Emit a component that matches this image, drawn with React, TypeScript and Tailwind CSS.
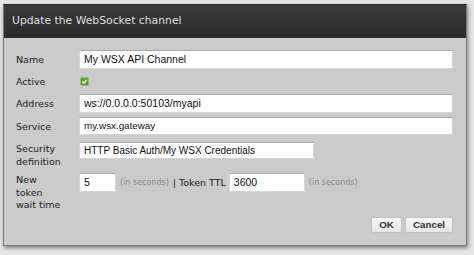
import React from "react";

function Field({ w, value, size = "text-[10.5px]", h = "h-[19px]" }: { w: string; value: string; size?: string; h?: string }) {
  return (
    <div
      className={`${w} ${h} ${size} bg-white border border-[#d4d4d4] border-t-[#a9a9a9] pl-[4px] flex items-center text-[#111] font-['Liberation_Sans',Arial,sans-serif] leading-none`}
    >
      {value}
    </div>
  );
}

export default function App() {
  return (
    <div className="min-h-screen w-[474px] h-[255px] overflow-hidden bg-[#e4e4e4] pt-[4px] pl-[3px] font-['DejaVu_Sans',Verdana,sans-serif]">
      <div className="w-[464px] h-[242px] bg-[#cbcbcb] border border-[#7a7a7a] border-t-[#2a2a2a] shadow-[1px_2px_4px_rgba(0,0,0,0.45)] flex flex-col">
        <div className="h-[33px] bg-gradient-to-b from-[#3b3b3b] to-[#2b2b2b] flex items-center pl-[8px] text-[#dedede] text-[10.8px]">
          Update the WebSocket channel
        </div>
        <div className="flex flex-col px-[12px] pt-[12px] text-[9.5px] text-[#222] leading-[13px]">
          <div className="flex items-center">
            <div className="w-[63px]">Name</div>
            <Field w="w-[374px]" value="My WSX API Channel" />
          </div>
          <div className="flex items-center mt-[3px] h-[19px]">
            <div className="w-[63px]">Active</div>
            <svg width="9" height="9" viewBox="0 0 9 9" className="ml-[1px]">
              <rect x="0.5" y="0.5" width="8" height="8" rx="1.5" fill="#5e9c2b" stroke="#8cc25a" />
              <path d="M2.3 4.6 L3.8 6 L6.7 3" stroke="#ffffff" strokeWidth="1.3" fill="none" />
            </svg>
          </div>
          <div className="flex items-center mt-[3px]">
            <div className="w-[63px]">Address</div>
            <Field w="w-[374px]" value="ws://0.0.0.0:50103/myapi" />
          </div>
          <div className="flex items-center mt-[4px]">
            <div className="w-[63px]">Service</div>
            <Field w="w-[374px]" h="h-[18px]" size="text-[9.8px]" value="my.wsx.gateway" />
          </div>
          <div className="flex items-start mt-[7px]">
            <div className="w-[63px]">
              Security
              <br />
              definition
            </div>
            <Field w="w-[235px]" h="h-[17px]" size="text-[10px]" value="HTTP Basic Auth/My WSX Credentials" />
          </div>
          <div className="flex items-start mt-[5px]">
            <div className="w-[63px] pt-[1px] leading-[12.5px]">
              New
              <br />
              token
              <br />
              wait time
            </div>
            <Field w="w-[37px]" value="5" />
            <div className="h-[19px] flex items-center ml-[4px]">
              <span className="text-[8px] text-[#8a8a8a]">(in seconds)</span>
              <span className="ml-[4px] text-[9.5px] text-[#222]">| Token TTL</span>
            </div>
            <div className="ml-[3px]">
              <Field w="w-[76px]" value="3600" />
            </div>
            <div className="h-[19px] flex items-center ml-[4px]">
              <span className="text-[8px] text-[#8a8a8a]">(in seconds)</span>
            </div>
          </div>
          <div className="flex justify-end gap-[3px] mt-[5px] pr-[1px] font-['Liberation_Sans',Arial,sans-serif] font-bold text-[9.8px] text-[#333]">
            <button className="w-[31px] h-[16px] rounded-[2px] bg-gradient-to-b from-[#f7f7f7] to-[#e6e6e6] border border-[#c2c2c2] leading-none flex items-center justify-center">
              OK
            </button>
            <button className="w-[48px] h-[16px] rounded-[2px] bg-gradient-to-b from-[#f7f7f7] to-[#e6e6e6] border border-[#c2c2c2] leading-none flex items-center justify-center">
              Cancel
            </button>
          </div>
        </div>
      </div>
    </div>
  );
}
